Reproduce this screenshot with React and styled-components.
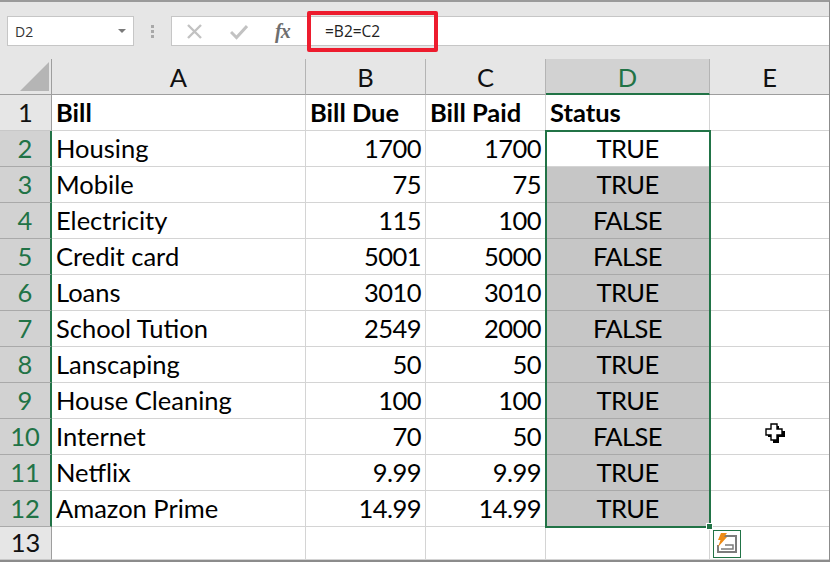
import React from "react";
import styled, { createGlobalStyle } from "styled-components";

const Global = createGlobalStyle`
    html, body { margin: 0; padding: 0; background: #fff; overflow: hidden; }
    * { box-sizing: border-box; }
`;

const Ventana = styled.div`
    position: relative;
    width: 830px;
    height: 562px;
    display: flex;
    flex-direction: column;
    overflow: hidden;
    border-top: 2px solid #9a9a9a;
    border-bottom: 2px solid #8c8c8c;
    border-right: 1px solid #8c8c8c;
    font-family: "Lato", "Liberation Sans", sans-serif;
    color: #000;
`;

const BarraFormula = styled.div`
    height: 57px;
    flex: none;
    display: flex;
    align-items: center;
    padding: 1px 0 0 7px;
    background: #e6e6e6;
`;

const NombreCaja = styled.div`
    width: 127px;
    height: 30px;
    display: flex;
    align-items: center;
    justify-content: space-between;
    padding: 0 7px;
    background: #fff;
    border: 1px solid #c6c6c6;
    font-family: "Open Sans", sans-serif;
    font-size: 14px;
    color: #333;
`;

const Flecha = styled.span`
    width: 0;
    height: 0;
    border-left: 4px solid transparent;
    border-right: 4px solid transparent;
    border-top: 4px solid #7a7a7a;
`;

const Puntos = styled.div`
    width: 37px;
    display: flex;
    flex-direction: column;
    align-items: center;
    gap: 2px;
    span {
        width: 3px;
        height: 3px;
        background: #a8a8a8;
    }
`;

const CajaFormula = styled.div`
    flex: 1;
    height: 30px;
    display: flex;
    align-items: center;
    background: #fff;
    border: 1px solid #c6c6c6;
    border-right: none;
`;

const Botones = styled.div`
    width: 136px;
    flex: none;
    display: flex;
    align-items: center;
    padding-left: 14px;
    gap: 27px;
`;

const Fx = styled.span`
    font-family: "Liberation Serif", serif;
    font-style: italic;
    font-weight: 700;
    font-size: 20px;
    color: #6e6e6e;
    letter-spacing: -1px;
`;

const TextoFormula = styled.div`
    position: relative;
    flex: 1;
    height: 100%;
    display: flex;
    align-items: center;
    padding-left: 17px;
    font-family: "Open Sans", sans-serif;
    font-size: 15.5px;
    color: #222;
`;

const MarcoRojo = styled.div`
    position: absolute;
    left: -1px;
    top: -6px;
    width: 131px;
    height: 41px;
    border: 4px solid #ed1c2e;
    border-radius: 2px;
`;

const Hoja = styled.div`
    position: relative;
    flex: 1;
    display: grid;
    grid-template-columns: 52px 254px 120px 120px 164px 120px;
    grid-template-rows: repeat(13, 36px) 1fr;
`;

const Cabecera = styled.div`
    display: flex;
    align-items: center;
    justify-content: center;
    padding-top: 1px;
    font-size: 25.5px;
    background: ${(p) => (p.$activa ? "#d2d2d2" : "#e6e6e6")};
    color: ${(p) => (p.$activa ? "#217346" : "#111")};
    border-right: 1px solid #b4b4b4;
    border-bottom: ${(p) => (p.$activa ? "2px solid #217346" : "1px solid #9e9e9e")};
`;

const Esquina = styled.div`
    display: flex;
    align-items: flex-end;
    justify-content: flex-end;
    padding: 0 2px 3px 0;
    background: #e6e6e6;
    border-right: 1px solid #9e9e9e;
    border-bottom: 1px solid #9e9e9e;
`;

const Triangulo = styled.span`
    width: 0;
    height: 0;
    border-left: 29px solid transparent;
    border-bottom: 29px solid #b5b5b5;
`;

const NumeroFila = styled.div`
    display: flex;
    align-items: center;
    justify-content: center;
    padding-bottom: 2px;
    font-size: 25.5px;
    background: ${(p) => (p.$activa ? "#d2d2d2" : "#e6e6e6")};
    color: ${(p) => (p.$activa ? "#217346" : "#111")};
    border-bottom: 1px solid ${(p) => (p.$activa ? "#a9a9a9" : "#c8c8c8")};
    border-right: ${(p) => (p.$activa ? "2px solid #217346" : "1px solid #9e9e9e")};
`;

const Celda = styled.div`
    display: flex;
    align-items: center;
    padding: 0 4px 2px 4px;
    font-size: 25.5px;
    font-weight: ${(p) => (p.$negrita ? 700 : 400)};
    letter-spacing: ${(p) => (p.$alinear ? "-0.55px" : "0")};
    justify-content: ${(p) =>
        p.$alinear === "der" ? "flex-end" : p.$alinear === "cen" ? "center" : "flex-start"};
    background: ${(p) => (p.$gris ? "#c6c6c6" : "#fff")};
    border-right: 1px solid #d4d4d4;
    border-bottom: 1px solid ${(p) => (p.$gris ? "#a9a9a9" : "#d4d4d4")};
    white-space: nowrap;
`;

const Seleccion = styled.div`
    position: absolute;
    grid-column: 5 / 6;
    grid-row: 3 / 14;
    inset: -1px -1px -1px -1px;
    border: 2px solid #217346;
    pointer-events: none;
`;

const Tirador = styled.span`
    position: absolute;
    right: -4px;
    bottom: -4px;
    width: 7px;
    height: 7px;
    background: #217346;
    border: 1px solid #fff;
`;

const EtiquetaRapida = styled.div`
    position: absolute;
    left: 713px;
    top: 528px;
    width: 28px;
    height: 28px;
    display: flex;
    align-items: center;
    justify-content: center;
    background: #fff;
    border: 1px solid #217346;
`;

const Cursor = styled.svg`
    position: absolute;
    left: 765px;
    top: 421px;
`;

const datos = [
    ["Housing", "1700", "1700", "TRUE"],
    ["Mobile", "75", "75", "TRUE"],
    ["Electricity", "115", "100", "FALSE"],
    ["Credit card", "5001", "5000", "FALSE"],
    ["Loans", "3010", "3010", "TRUE"],
    ["School Tution", "2549", "2000", "FALSE"],
    ["Lanscaping", "50", "50", "TRUE"],
    ["House Cleaning", "100", "100", "TRUE"],
    ["Internet", "70", "50", "FALSE"],
    ["Netflix", "9.99", "9.99", "TRUE"],
    ["Amazon Prime", "14.99", "14.99", "TRUE"],
];

const App = () => {
    return (
        <Ventana>
            <Global />
            <BarraFormula>
                <NombreCaja>
                    D2
                    <Flecha />
                </NombreCaja>
                <Puntos>
                    <span />
                    <span />
                    <span />
                </Puntos>
                <CajaFormula>
                    <Botones>
                        <svg width="17" height="17" viewBox="0 0 17 17">
                            <path d="M2 2 L15 15 M15 2 L2 15" stroke="#c2c2c2" strokeWidth="2.4" fill="none" />
                        </svg>
                        <svg width="18" height="17" viewBox="0 0 18 17">
                            <path d="M1 9 L6.5 14.5 L17 3" stroke="#c2c2c2" strokeWidth="3" fill="none" />
                        </svg>
                        <Fx>fx</Fx>
                    </Botones>
                    <TextoFormula>
                        =B2=C2
                        <MarcoRojo />
                    </TextoFormula>
                </CajaFormula>
            </BarraFormula>
            <Hoja>
                <Esquina>
                    <Triangulo />
                </Esquina>
                <Cabecera>A</Cabecera>
                <Cabecera>B</Cabecera>
                <Cabecera>C</Cabecera>
                <Cabecera $activa>D</Cabecera>
                <Cabecera>E</Cabecera>

                <NumeroFila>1</NumeroFila>
                <Celda $negrita>Bill</Celda>
                <Celda $negrita>Bill Due</Celda>
                <Celda $negrita>Bill Paid</Celda>
                <Celda $negrita>Status</Celda>
                <Celda />

                {datos.map((fila, i) => (
                    <React.Fragment key={fila[0]}>
                        <NumeroFila $activa>{i + 2}</NumeroFila>
                        <Celda>{fila[0]}</Celda>
                        <Celda $alinear="der">{fila[1]}</Celda>
                        <Celda $alinear="der">{fila[2]}</Celda>
                        <Celda $alinear="cen" $gris={i > 0}>{fila[3]}</Celda>
                        <Celda />
                    </React.Fragment>
                ))}

                <NumeroFila>13</NumeroFila>
                <Celda />
                <Celda />
                <Celda />
                <Celda />
                <Celda />

                <Seleccion>
                    <Tirador />
                </Seleccion>
            </Hoja>
            <EtiquetaRapida>
                <svg width="22" height="22" viewBox="0 0 22 22">
                    <path d="M8 3 H20 V19 H2 V12" fill="none" stroke="#7c7c7c" strokeWidth="2" />
                    <path d="M9 12 H17 V16 H5" fill="none" stroke="#7c7c7c" strokeWidth="1.5" />
                    <path d="M5 0 H11 L8 4 H11 L2 14 L4.5 7 H2 Z" fill="#ed8b16" />
                </svg>
            </EtiquetaRapida>
            <Cursor width="22" height="22" viewBox="0 0 22 22">
                <path d="M8 3 H14 V8 H20 V14 H14 V20 H8 V14 H3 V8 H8 Z" fill="#000" />
                <path d="M6 1 H12 V6 H17 V12 H12 V17 H6 V12 H1 V6 H6 Z" fill="#fff" stroke="#000" strokeWidth="1.4" />
            </Cursor>
        </Ventana>
    );
};

export default App;
